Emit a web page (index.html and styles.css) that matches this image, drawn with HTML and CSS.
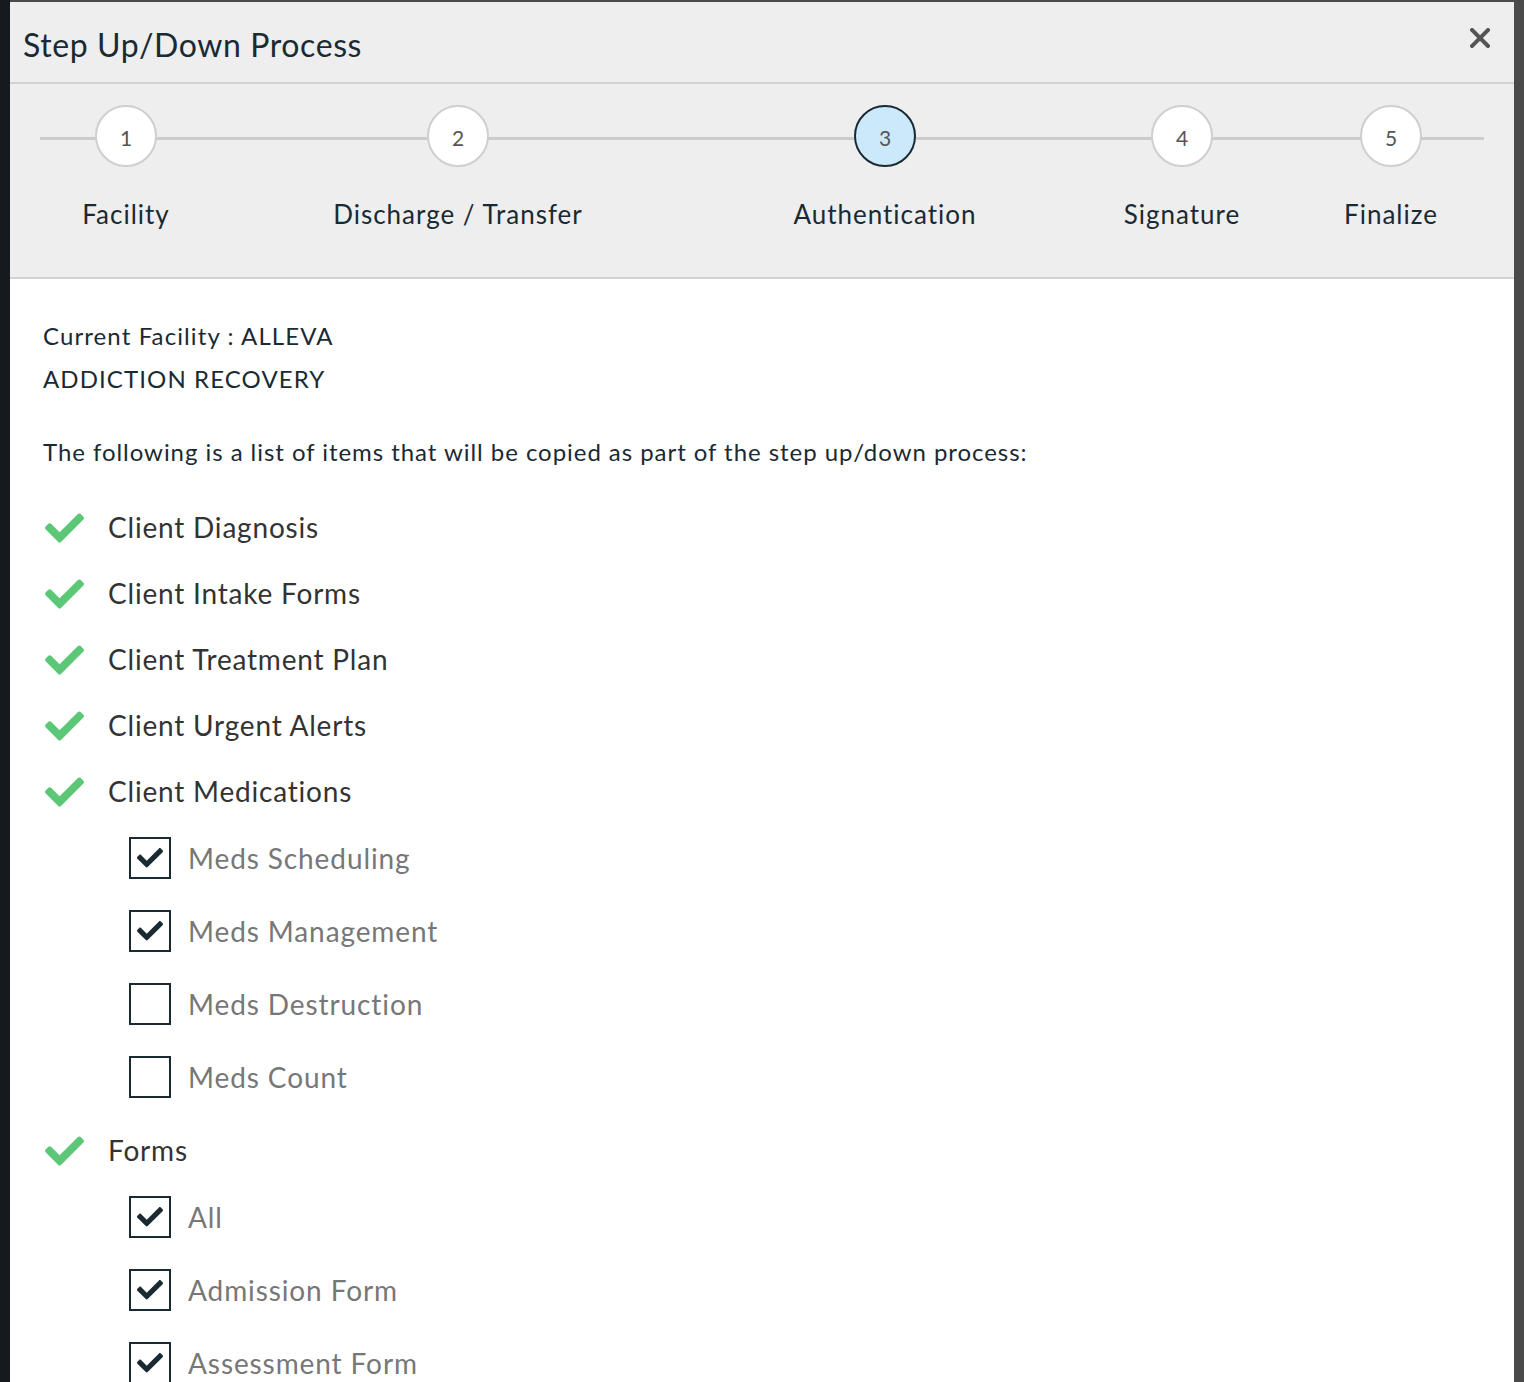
FILE: index.html
```html
<!DOCTYPE html>
<html>
  <head>
    <title>Step Up/Down Process</title>
    <link rel="stylesheet" href="styles.css">
  </head>
  <body>
    <div class="modal">
      <div class="modal-header">
        <h1>Step Up/Down Process</h1>
        <button class="close" type="button">
          <svg width="20" height="20" viewBox="0 0 20 20">
            <path d="M2 2L18 18M18 2L2 18" stroke="#555" stroke-width="4" stroke-linecap="square" />
          </svg>
        </button>
      </div>

      <div class="stepper">
        <ol class="steps">
          <li class="step"><span class="step-num">1</span><span class="step-label">Facility</span></li>
          <li class="step"><span class="step-num">2</span><span class="step-label">Discharge / Transfer</span></li>
          <li class="step active"><span class="step-num">3</span><span class="step-label">Authentication</span></li>
          <li class="step"><span class="step-num">4</span><span class="step-label">Signature</span></li>
          <li class="step"><span class="step-num">5</span><span class="step-label">Finalize</span></li>
        </ol>
      </div>

      <div class="modal-body">
        <p class="facility">Current Facility : ALLEVA ADDICTION RECOVERY</p>
        <p class="intro">The following is a list of items that will be copied as part of the step up/down process:</p>

        <ul class="copy-list">
          <li class="copy-item">
            <svg class="ok" viewBox="0 0 512 400"><path d="M173.9 389.4L7.5 223c-10-10-10-26.2 0-36.2l36.2-36.2c10-10 26.2-10 36.2 0L192 262.7 432.1 22.6c10-10 26.2-10 36.2 0l36.2 36.2c10 10 10 26.2 0 36.2L210.1 389.4c-10 10-26.2 10-36.2 0z"/></svg>
            Client Diagnosis
          </li>
          <li class="copy-item">
            <svg class="ok" viewBox="0 0 512 400"><path d="M173.9 389.4L7.5 223c-10-10-10-26.2 0-36.2l36.2-36.2c10-10 26.2-10 36.2 0L192 262.7 432.1 22.6c10-10 26.2-10 36.2 0l36.2 36.2c10 10 10 26.2 0 36.2L210.1 389.4c-10 10-26.2 10-36.2 0z"/></svg>
            Client Intake Forms
          </li>
          <li class="copy-item">
            <svg class="ok" viewBox="0 0 512 400"><path d="M173.9 389.4L7.5 223c-10-10-10-26.2 0-36.2l36.2-36.2c10-10 26.2-10 36.2 0L192 262.7 432.1 22.6c10-10 26.2-10 36.2 0l36.2 36.2c10 10 10 26.2 0 36.2L210.1 389.4c-10 10-26.2 10-36.2 0z"/></svg>
            Client Treatment Plan
          </li>
          <li class="copy-item">
            <svg class="ok" viewBox="0 0 512 400"><path d="M173.9 389.4L7.5 223c-10-10-10-26.2 0-36.2l36.2-36.2c10-10 26.2-10 36.2 0L192 262.7 432.1 22.6c10-10 26.2-10 36.2 0l36.2 36.2c10 10 10 26.2 0 36.2L210.1 389.4c-10 10-26.2 10-36.2 0z"/></svg>
            Client Urgent Alerts
          </li>
          <li class="copy-item">
            <svg class="ok" viewBox="0 0 512 400"><path d="M173.9 389.4L7.5 223c-10-10-10-26.2 0-36.2l36.2-36.2c10-10 26.2-10 36.2 0L192 262.7 432.1 22.6c10-10 26.2-10 36.2 0l36.2 36.2c10 10 10 26.2 0 36.2L210.1 389.4c-10 10-26.2 10-36.2 0z"/></svg>
            Client Medications
          </li>
        </ul>
        <ul class="sub-list">
          <li class="sub-item"><span class="box checked"><svg viewBox="0 0 512 400"><path d="M173.9 389.4L7.5 223c-10-10-10-26.2 0-36.2l36.2-36.2c10-10 26.2-10 36.2 0L192 262.7 432.1 22.6c10-10 26.2-10 36.2 0l36.2 36.2c10 10 10 26.2 0 36.2L210.1 389.4c-10 10-26.2 10-36.2 0z"/></svg></span>Meds Scheduling</li>
          <li class="sub-item"><span class="box checked"><svg viewBox="0 0 512 400"><path d="M173.9 389.4L7.5 223c-10-10-10-26.2 0-36.2l36.2-36.2c10-10 26.2-10 36.2 0L192 262.7 432.1 22.6c10-10 26.2-10 36.2 0l36.2 36.2c10 10 10 26.2 0 36.2L210.1 389.4c-10 10-26.2 10-36.2 0z"/></svg></span>Meds Management</li>
          <li class="sub-item"><span class="box"></span>Meds Destruction</li>
          <li class="sub-item"><span class="box"></span>Meds Count</li>
        </ul>

        <ul class="copy-list">
          <li class="copy-item">
            <svg class="ok" viewBox="0 0 512 400"><path d="M173.9 389.4L7.5 223c-10-10-10-26.2 0-36.2l36.2-36.2c10-10 26.2-10 36.2 0L192 262.7 432.1 22.6c10-10 26.2-10 36.2 0l36.2 36.2c10 10 10 26.2 0 36.2L210.1 389.4c-10 10-26.2 10-36.2 0z"/></svg>
            Forms
          </li>
        </ul>
        <ul class="sub-list">
          <li class="sub-item"><span class="box checked"><svg viewBox="0 0 512 400"><path d="M173.9 389.4L7.5 223c-10-10-10-26.2 0-36.2l36.2-36.2c10-10 26.2-10 36.2 0L192 262.7 432.1 22.6c10-10 26.2-10 36.2 0l36.2 36.2c10 10 10 26.2 0 36.2L210.1 389.4c-10 10-26.2 10-36.2 0z"/></svg></span>All</li>
          <li class="sub-item"><span class="box checked"><svg viewBox="0 0 512 400"><path d="M173.9 389.4L7.5 223c-10-10-10-26.2 0-36.2l36.2-36.2c10-10 26.2-10 36.2 0L192 262.7 432.1 22.6c10-10 26.2-10 36.2 0l36.2 36.2c10 10 10 26.2 0 36.2L210.1 389.4c-10 10-26.2 10-36.2 0z"/></svg></span>Admission Form</li>
          <li class="sub-item"><span class="box checked"><svg viewBox="0 0 512 400"><path d="M173.9 389.4L7.5 223c-10-10-10-26.2 0-36.2l36.2-36.2c10-10 26.2-10 36.2 0L192 262.7 432.1 22.6c10-10 26.2-10 36.2 0l36.2 36.2c10 10 10 26.2 0 36.2L210.1 389.4c-10 10-26.2 10-36.2 0z"/></svg></span>Assessment Form</li>
        </ul>
      </div>
    </div>
  </body>
</html>
```

FILE: styles.css
```css
body {
  margin: 0;
  font-family: Lato, "Open Sans", sans-serif;
  color: #1a2a33;
  background: linear-gradient(to right, #16191e 0 10px, #4a4a4a 10px);
  height: 1382px;
  overflow: hidden;
}
.modal {
  margin: 2px 0 0 10px;
  width: 1504px;
  background-color: #fff;
}
.modal-header {
  display: flex;
  align-items: center;
  justify-content: space-between;
  height: 80px;
  padding: 0 24px 0 13px;
  background-color: #eeeeee;
  border-bottom: 2px solid #d2d2d2;
}
.modal-header h1 {
  margin: 4px 0 0 0;
  font-size: 32px;
  font-weight: 400;
  letter-spacing: 0.6px;
  color: #1a2a33;
}
.close {
  display: flex;
  padding: 0;
  margin-top: -8px;
  background: none;
  border: none;
  cursor: pointer;
}
.stepper {
  padding: 21px 30px 48px 30px;
  background-color: #eeeeee;
  border-bottom: 2px solid #d2d2d2;
}
.steps {
  display: grid;
  grid-template-columns: 172fr 492fr 362fr 232fr 186fr;
  margin: 0;
  padding: 0;
  list-style: none;
  background: linear-gradient(#cccccc, #cccccc) no-repeat 0 32px / 100% 3px;
}
.step {
  display: flex;
  flex-direction: column;
  align-items: center;
}
.step-num {
  display: flex;
  align-items: center;
  justify-content: center;
  box-sizing: border-box;
  width: 62px;
  height: 62px;
  padding-top: 2px;
  border: 2px solid #cfcfcf;
  border-radius: 50%;
  background-color: #fff;
  font-size: 21px;
  color: #555;
}
.step.active .step-num {
  background-color: #cce9fb;
  border-color: #1a2a33;
}
.step-label {
  margin-top: 32px;
  font-size: 26px;
  line-height: 30px;
  letter-spacing: 1px;
  color: #1a2a33;
  white-space: nowrap;
}
.modal-body {
  padding: 35px 33px 40px 33px;
}
.facility {
  width: 330px;
  margin: 0;
  font-size: 24px;
  line-height: 43px;
  letter-spacing: 1.1px;
}
.intro {
  margin: 30px 0 21px 0;
  font-size: 24px;
  line-height: 43px;
  letter-spacing: 0.95px;
}
.copy-list,
.sub-list {
  margin: 0;
  padding: 0;
  list-style: none;
}
.copy-item {
  display: flex;
  align-items: center;
  height: 66px;
  font-size: 28px;
  letter-spacing: 0.8px;
  color: #333;
}
.ok {
  width: 39px;
  height: 31px;
  margin: 0 24px 0 2px;
  fill: #5cc877;
}
.sub-list {
  margin: -3px 0 4px 86px;
}
.sub-item {
  display: flex;
  align-items: center;
  height: 73px;
  font-size: 28px;
  letter-spacing: 0.9px;
  color: #777;
}
.box {
  display: flex;
  align-items: center;
  justify-content: center;
  box-sizing: border-box;
  width: 42px;
  height: 42px;
  margin-right: 17px;
  border: 2px solid #1a2a33;
  background-color: #fff;
}
.box svg {
  width: 26px;
  height: 21px;
  fill: #1a2a33;
}
```
